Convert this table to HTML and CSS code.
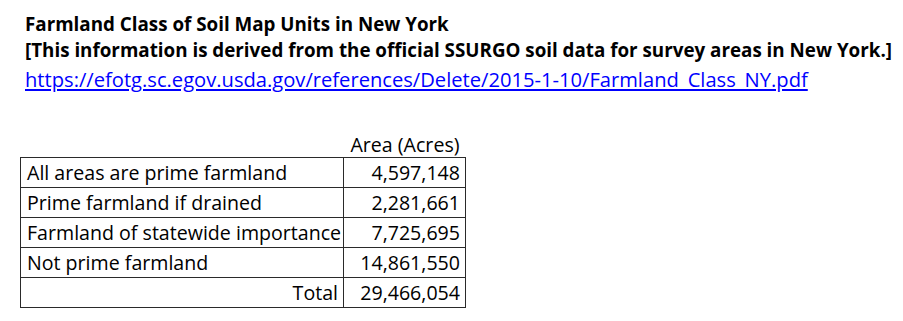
FILE: index.html
```html
<!DOCTYPE html>
<html>
<head>
<meta charset="utf-8">
<link rel="stylesheet" href="styles.css">
</head>
<body>
<div class="sheet">
  <div class="heading">
    <div class="title">Farmland Class of Soil Map Units in New York</div>
    <div class="title">[This information is derived from the official SSURGO soil data for survey areas in New York.]</div>
    <div class="link-line"><a class="link" href="#">https://efotg.sc.egov.usda.gov/references/Delete/2015-1-10/Farmland_Class_NY.pdf</a></div>
  </div>
  <table class="data">
    <colgroup><col class="c1"><col class="c2"></colgroup>
    <thead>
      <tr><th class="blank"></th><th class="col-head">Area (Acres)</th></tr>
    </thead>
    <tbody>
      <tr><td class="label">All areas are prime farmland</td><td class="num">4,597,148</td></tr>
      <tr><td class="label">Prime farmland if drained</td><td class="num">2,281,661</td></tr>
      <tr><td class="label">Farmland of statewide importance</td><td class="num">7,725,695</td></tr>
      <tr><td class="label">Not prime farmland</td><td class="num">14,861,550</td></tr>
      <tr><td class="label total">Total</td><td class="num">29,466,054</td></tr>
    </tbody>
  </table>
</div>
</body>
</html>
```
FILE: styles.css
```css
html, body {
  margin: 0;
  padding: 0;
  background: #ffffff;
}
.sheet {
  font-family: "Open Sans", "Noto Sans", sans-serif;
  color: #000;
  padding-top: 11px;
}
.heading {
  padding-left: 25px;
  font-size: 18.8px;
  line-height: 26px;
}
.title {
  font-weight: bold;
  white-space: nowrap;
}
.link-line {
  white-space: nowrap;
  font-size: 20.15px;
  margin-top: 3px;
}
.link {
  color: #0000ff;
  text-decoration: underline;
}
.data {
  margin-left: 20px;
  margin-top: 38px;
  border-collapse: collapse;
  table-layout: fixed;
  width: 445px;
  font-size: 19.6px;
}
.c1 { width: 323px; }
.c2 { width: 122px; }
.data th {
  font-weight: normal;
  padding: 0 6px 0 0;
  height: 27px;
  line-height: 24px;
  vertical-align: bottom;
}
.col-head {
  text-align: right;
}
.data td {
  border: 1px solid #2a2a2a;
  padding: 0 5px 0 6px;
  line-height: 29px;
  white-space: nowrap;
}
.label {
  text-align: left;
}
.label.total {
  text-align: right;
}
.num {
  text-align: right;
}
```
